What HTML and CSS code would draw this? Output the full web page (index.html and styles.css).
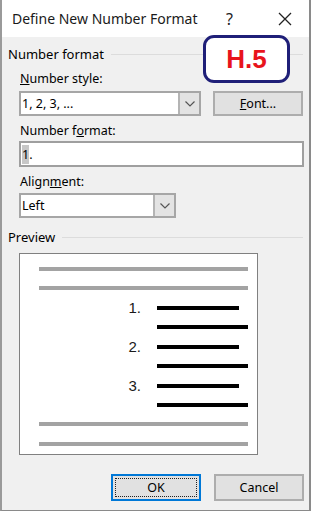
FILE: index.html
```html
<!DOCTYPE html>
<html>
<head>
<meta charset="utf-8">
<link rel="stylesheet" href="styles.css">
</head>
<body>
<div class="window">
  <div class="titlebar">
    <span class="title">Define New Number Format</span>
    <span class="help">?</span>
    <svg class="close" width="14" height="14" viewBox="0 0 14 14"><path d="M1 1 L13 13 M13 1 L1 13" stroke="#222" stroke-width="1.3" fill="none"/></svg>
  </div>
  <div class="content">
    <div class="group-head g1"><span>Number format</span><div class="rule"></div></div>
    <div class="lbl l1"><u>N</u>umber style:</div>
    <div class="row r1">
      <div class="select wide"><span class="val">1, 2, 3, ...</span><span class="arrow"><svg width="10" height="6" viewBox="0 0 10 6"><path d="M0.5 0.5 L5 5 L9.5 0.5" stroke="#555" stroke-width="1.2" fill="none"/></svg></span></div>
      <div class="btn"><u>F</u>ont...</div>
    </div>
    <div class="lbl l2">Number f<u>o</u>rmat:</div>
    <div class="input"><span class="sel">1</span>.</div>
    <div class="lbl l3">Align<u>m</u>ent:</div>
    <div class="select narrow"><span class="val">Left</span><span class="arrow"><svg width="10" height="6" viewBox="0 0 10 6"><path d="M0.5 0.5 L5 5 L9.5 0.5" stroke="#555" stroke-width="1.2" fill="none"/></svg></span></div>
    <div class="group-head g2"><span>Preview</span><div class="rule"></div></div>
    <div class="preview">
      <svg width="237" height="200" viewBox="0 0 237 200">
        <rect x="18" y="12" width="209" height="4" fill="#a3a3a3"/>
        <rect x="18" y="31" width="209" height="4" fill="#a3a3a3"/>
        <text x="120" y="58" text-anchor="end" class="num">1.</text>
        <rect x="136" y="51" width="82" height="4" fill="#000"/>
        <rect x="136" y="70" width="91" height="4" fill="#000"/>
        <text x="120" y="97" text-anchor="end" class="num">2.</text>
        <rect x="136" y="90" width="82" height="4" fill="#000"/>
        <rect x="136" y="109" width="91" height="4" fill="#000"/>
        <text x="120" y="136" text-anchor="end" class="num">3.</text>
        <rect x="136" y="129" width="82" height="4" fill="#000"/>
        <rect x="136" y="148" width="91" height="4" fill="#000"/>
        <rect x="18" y="167" width="209" height="4" fill="#a3a3a3"/>
        <rect x="18" y="187" width="209" height="4" fill="#a3a3a3"/>
      </svg>
    </div>
    <div class="buttons">
      <div class="btn ok"><span class="focus">OK</span></div>
      <div class="btn">Cancel</div>
    </div>
  </div>
  <div class="badge">H.5</div>
</div>
</body>
</html>
```
FILE: styles.css
```css
html, body { margin: 0; padding: 0; background: #fff; }
body { width: 313px; height: 513px; overflow: hidden; font-family: "Noto Sans", "Open Sans", sans-serif; color: #000; }
.window {
  position: relative;
  width: 307px; height: 510px;
  border-left: 2px solid #9a9a9a;
  border-right: 2px solid #8a8a8a;
  border-bottom: 1px solid #8a8a8a;
  background: #f0f0f0;
  display: flex; flex-direction: column;
}
.titlebar {
  height: 37px; background: #fff;
  display: flex; align-items: center;
  padding-left: 10px;
  box-sizing: border-box;
}
.title { font-size: 14px; color: #1a1a1a; flex: 1; padding-bottom: 1px; }
.help { font-size: 16px; color: #222; width: 12px; margin-right: 40px; }
.close { margin-right: 17px; }
.content { padding: 0 5px 0 6px; display: flex; flex-direction: column; font-size: 12.5px; }
.group-head { display: flex; align-items: center; height: 18px; font-size: 13px; }
.group-head .rule { flex: 1; height: 1px; background: #dcdcdc; margin-left: 7px; margin-right: 1px; }
.g1 { margin-top: 8px; }
.g2 { margin-top: 10px; }
.lbl { height: 18px; line-height: 18px; margin-left: 12px; }
.l1 { margin-top: 7px; }
.l2 { margin-top: 6px; }
.l3 { margin-top: 6px; }
.row { display: flex; gap: 12px; margin-left: 11px; }
.r1 { margin-top: 3px; }
.select {
  box-sizing: border-box; height: 25px; background: #fff;
  border: 2px solid #a6a6a6;
  display: flex; align-items: center;
}
.select .val { flex: 1; padding-left: 1px; }
.select .arrow {
  width: 19px; height: 100%; background: #e3e3e3; border-left: 2px solid #b4b4b4;
  display: flex; align-items: center; justify-content: center;
}
.wide { width: 182px; }
.narrow { width: 157px; margin-left: 11px; margin-top: 2px; }
.btn {
  box-sizing: border-box; width: 90px; height: 25px;
  background: #e1e1e1; border: 2px solid #adadad;
  display: flex; align-items: center; justify-content: center;
}
.input {
  box-sizing: border-box; width: 285px; height: 26px; margin-left: 11px; margin-top: 1px;
  background: #fff; border: 2px solid #9f9f9f;
  display: flex; align-items: center; padding-left: 1px;
}
.input .sel { background: #c7c7c7; padding: 1px 0; }
.preview {
  box-sizing: border-box; width: 239px; height: 202px;
  margin-left: 11px; margin-top: 7px;
  background: #fff; border: 1px solid #808080;
  padding: 1px;
}
.preview svg { display: block; }
.num { font-family: "Liberation Sans", Arial, sans-serif; font-size: 15px; fill: #1a1a1a; }
.buttons { display: flex; justify-content: flex-end; gap: 13px; margin-top: 19px; }
.buttons .btn { height: 27px; }
.ok { border-color: #0078d7; padding: 2px; }
.ok .focus { flex: 1; align-self: stretch; display: flex; align-items: center; justify-content: center; border: 1px dotted #222; }
.badge {
  position: absolute; left: 201px; top: 35px;
  width: 87px; height: 48px; box-sizing: border-box;
  border: 3px solid #1f1f78; border-radius: 11px;
  background: #fff;
  font-family: "Liberation Sans", Arial, sans-serif; font-weight: bold;
  font-size: 26px; color: #e8141c;
  display: flex; align-items: center; justify-content: center;
}
```
